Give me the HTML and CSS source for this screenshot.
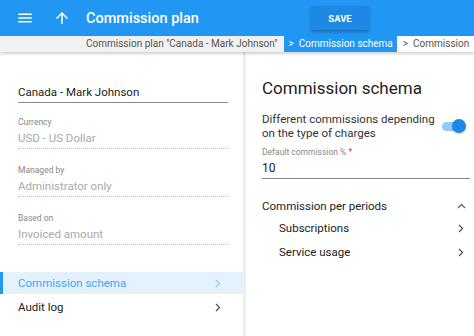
FILE: index.html
```html
<!DOCTYPE html>
<html lang="en">
<head>
    <meta charset="UTF-8">
    <title>Commission plan</title>
    <link rel="stylesheet" href="styles.css">
</head>
<body>
    <header class="topbar">
        <svg class="icon menu" width="18" height="18" viewBox="0 0 24 24"><path d="M3 6h18v2H3zm0 5h18v2H3zm0 5h18v2H3z" fill="#fff"/></svg>
        <svg class="icon up" width="18" height="18" viewBox="0 0 24 24"><path d="M4 12l1.41 1.41L11 7.83V20h2V7.83l5.58 5.59L20 12l-8-8-8 8z" fill="#fff"/></svg>
        <h1 class="title">Commission plan</h1>
        <button class="save-btn">SAVE</button>
    </header>

    <nav class="crumbs">
        <span class="crumb">Commission plan "Canada - Mark Johnson"</span>
        <span class="crumb active"><span class="sep">&gt;</span>Commission schema</span>
        <span class="crumb last"><span class="sep">&gt;</span>Commission</span>
    </nav>

    <main class="content">
        <aside class="side">
            <div class="field name">Canada - Mark Johnson</div>

            <div class="field ro">
                <div class="label">Currency</div>
                <div class="value">USD - US Dollar</div>
            </div>
            <div class="field ro">
                <div class="label">Managed by</div>
                <div class="value">Administrator only</div>
            </div>
            <div class="field ro">
                <div class="label">Based on</div>
                <div class="value">Invoiced amount</div>
            </div>

            <ul class="side-nav">
                <li class="selected">Commission schema
                    <svg class="chev" width="6" height="9" viewBox="0 0 6 9"><path d="M1 1l3.5 3.5L1 8" fill="none" stroke="#90caf9" stroke-width="1.3"/></svg>
                </li>
                <li>Audit log
                    <svg class="chev" width="6" height="9" viewBox="0 0 6 9"><path d="M1 1l3.5 3.5L1 8" fill="none" stroke="#555" stroke-width="1.3"/></svg>
                </li>
            </ul>
        </aside>

        <section class="panel">
            <h2>Commission schema</h2>
            <div class="switch-row">
                <span class="switch-text">Different commissions depending on the type of charges</span>
                <span class="switch"><span class="knob"></span></span>
            </div>
            <div class="input">
                <div class="label">Default commission % <span class="req">*</span></div>
                <div class="value">10</div>
            </div>

            <div class="group-head">Commission per periods
                <svg class="chev" width="9" height="6" viewBox="0 0 9 6"><path d="M1 5l3.5-3.5L8 5" fill="none" stroke="#666" stroke-width="1.3"/></svg>
            </div>
            <ul class="sub-list">
                <li>Subscriptions
                    <svg class="chev" width="6" height="9" viewBox="0 0 6 9"><path d="M1 1l3.5 3.5L1 8" fill="none" stroke="#555" stroke-width="1.3"/></svg>
                </li>
                <li>Service usage
                    <svg class="chev" width="6" height="9" viewBox="0 0 6 9"><path d="M1 1l3.5 3.5L1 8" fill="none" stroke="#555" stroke-width="1.3"/></svg>
                </li>
            </ul>
        </section>
    </main>
</body>
</html>
```

FILE: styles.css
```css
* {
    margin: 0;
    padding: 0;
    box-sizing: border-box;
}

body {
    font-family: Roboto, "Liberation Sans", sans-serif;
    background: #fff;
    color: #222;
    width: 474px;
    height: 336px;
    overflow: hidden;
}

.topbar {
    height: 36px;
    background: #2196f3;
    display: flex;
    align-items: center;
    padding-left: 16px;
    color: #fff;
}

.icon.up {
    margin-left: 19px;
}

.title {
    font-size: 14.5px;
    font-weight: 500;
    margin-left: 15px;
    width: 225px;
}

.save-btn {
    width: 58px;
    height: 24px;
    background: #1e88e5;
    color: #fff;
    border: none;
    font-family: inherit;
    font-size: 9.5px;
    font-weight: 700;
    box-shadow: 0 2px 3px rgba(0, 0, 0, 0.25);
    border-radius: 2px;
}

.crumbs {
    height: 16px;
    background: #f1f1f1;
    display: flex;
    font-size: 10px;
    color: #555;
    padding-left: 86px;
    white-space: nowrap;
    box-shadow: 0 2px 3px rgba(0, 0, 0, 0.18);
    position: relative;
}

.crumb {
    line-height: 16px;
    padding-right: 6px;
}

.crumb.active {
    background: #2196f3;
    color: #fff;
    padding: 0 4px 0 5px;
}

.crumb.last {
    background: #fff;
    padding-left: 6px;
}

.sep {
    margin-right: 5px;
}

.content {
    display: flex;
    height: 284px;
}

.side {
    width: 246px;
    border-right: 3px solid #eeeeee;
    padding-top: 33px;
    flex-shrink: 0;
}

.field {
    margin: 0 15px 0 18px;
}

.field.name {
    font-size: 11.5px;
    line-height: 14px;
    padding-bottom: 3px;
    border-bottom: 1px solid #8a8a8a;
    margin-bottom: 14px;
}

.field.ro {
    border-bottom: 1px dotted #bbb;
    padding-bottom: 2px;
    margin-bottom: 16px;
}

.label {
    font-size: 8.5px;
    line-height: 11px;
    color: #888;
    margin-bottom: 3px;
}

.field.ro .value {
    font-size: 11.5px;
    line-height: 15px;
    color: #aaa;
}

.side-nav {
    list-style: none;
    margin-top: 27px;
}

.side-nav li {
    height: 22px;
    display: flex;
    align-items: center;
    justify-content: space-between;
    padding: 0 22px 0 18px;
    font-size: 11.5px;
    margin-bottom: 2px;
}

.side-nav li.selected {
    background: #e3f2fd;
    color: #42a5f5;
    border-left: 3px solid #2196f3;
    padding-left: 15px;
}

.panel {
    flex: 1;
    padding: 26px 4px 0 16px;
}

.panel h2 {
    font-size: 17px;
    line-height: 20px;
    font-weight: 400;
    color: #222;
    margin-bottom: 14px;
}

.switch-row {
    display: flex;
    justify-content: space-between;
    align-items: center;
    font-size: 11.5px;
    color: #333;
    line-height: 14px;
}

.switch-text {
    width: 180px;
}

.switch {
    width: 20px;
    height: 9px;
    background: #90caf9;
    border-radius: 5px;
    position: relative;
    margin-right: 8px;
    flex-shrink: 0;
}

.knob {
    position: absolute;
    right: -4px;
    top: -2.5px;
    width: 14px;
    height: 14px;
    border-radius: 50%;
    background: #1e88e5;
    box-shadow: 0 1px 2px rgba(0, 0, 0, 0.2);
}

.input {
    margin-top: 7px;
    border-bottom: 1px solid #8a8a8a;
    padding-bottom: 3px;
}

.input .label {
    margin-bottom: 3px;
}

.input .value {
    font-size: 12px;
    line-height: 14px;
}

.req {
    color: #e53935;
}

.group-head {
    margin-top: 17px;
    display: flex;
    justify-content: space-between;
    align-items: center;
    font-size: 11.5px;
    padding-right: 4px;
    height: 20px;
}

.sub-list {
    list-style: none;
    padding-left: 17px;
}

.sub-list li {
    display: flex;
    justify-content: space-between;
    align-items: center;
    font-size: 11.5px;
    height: 24px;
    padding-right: 6px;
}
```
